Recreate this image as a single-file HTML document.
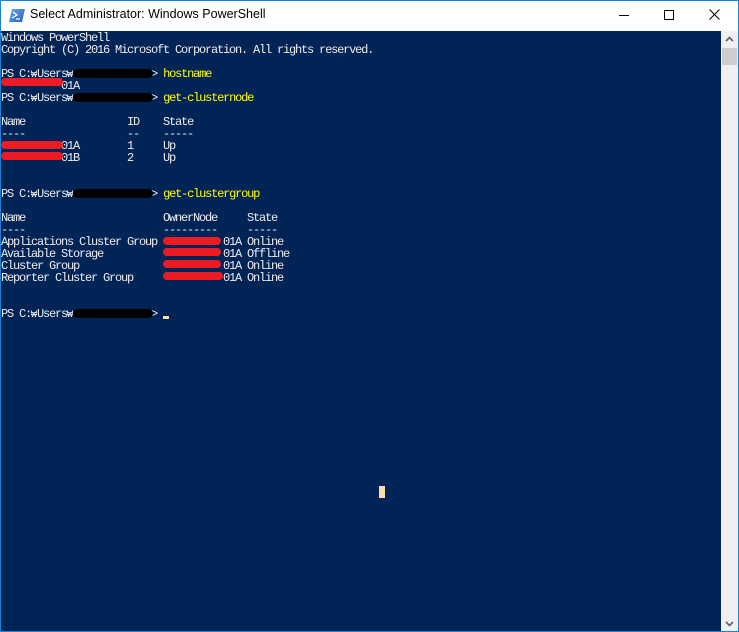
<!DOCTYPE html>
<html><head><meta charset="utf-8"><style>
body{margin:0;width:739px;height:632px;overflow:hidden;background:#fff;position:relative;font-family:"Liberation Sans",sans-serif}
.win{position:absolute;left:0;top:0;width:737px;height:630px;border:1px solid #1883d7;}
.title{position:absolute;left:30px;top:7px;font-size:12.5px;color:#000}
.con{position:absolute;left:1px;top:31px;width:720px;height:600px;background:#012456;}
.sb{position:absolute;left:721px;top:31px;width:17px;height:600px;background:#f0f0f0}
.l{position:absolute;left:1px;font-family:"Liberation Mono",monospace;font-size:12px;line-height:12px;color:#eeedf0;white-space:pre;letter-spacing:-1.2px}
.w{display:inline-block;width:6px;overflow:visible;letter-spacing:0;font-size:10px}
.y{color:#ffff00}
.blk{position:absolute;background:#000;border-radius:5px;height:9px}
.red{position:absolute;background:#ed1c24;border-radius:5px;height:8px}
</style></head><body>
<div class="win"></div>
<svg style="position:absolute;left:9px;top:9px" width="16" height="13"><defs><linearGradient id="g" x1="0" y1="0" x2="1" y2="1"><stop offset="0" stop-color="#6fa8e8"/><stop offset="1" stop-color="#2262b6"/></linearGradient></defs><path d="M3 0H16L13 13H0Z" fill="url(#g)"/><path d="M4 3L8 6L3 9" stroke="#fff" stroke-width="1.3" fill="none"/><path d="M7 10H11" stroke="#fff" stroke-width="1.2"/></svg>
<div class="title">Select Administrator: Windows PowerShell</div>
<div style="position:absolute;left:619px;top:15px;width:10px;height:1px;background:#000"></div>
<div style="position:absolute;left:664px;top:10px;width:8px;height:8px;border:1px solid #000"></div>
<svg style="position:absolute;left:709px;top:9px" width="11" height="11"><path d="M0.5 0.5L10.5 10.5M10.5 0.5L0.5 10.5" stroke="#000" stroke-width="1"/></svg>
<div class="con"></div>
<div class="sb"><div style="position:absolute;left:1px;top:17px;width:15px;height:17px;background:#cdcdcd"></div>
<svg style="position:absolute;left:4px;top:5px" width="9" height="6"><path d="M1 5L4.5 1.5L8 5" stroke="#606060" stroke-width="1.6" fill="none"/></svg>
<svg style="position:absolute;left:4px;top:590px" width="9" height="6"><path d="M1 1L4.5 4.5L8 1" stroke="#606060" stroke-width="1.6" fill="none"/></svg></div>
<div class="l" style="top:32px">Windows PowerShell</div>
<div class="l" style="top:44px">Copyright (C) 2016 Microsoft Corporation. All rights reserved.</div>
<div class="l" style="top:68px">PS C:<span class="w">₩</span>Users<span class="w">₩</span>             &gt; <span class="y">hostname</span></div>
<div class="l" style="top:80px">          01A</div>
<div class="l" style="top:92px">PS C:<span class="w">₩</span>Users<span class="w">₩</span>             &gt; <span class="y">get-clusternode</span></div>
<div class="l" style="top:116px">Name                 ID    State</div>
<div class="l" style="top:128px">----                 --    -----</div>
<div class="l" style="top:140px">          01A        1     Up</div>
<div class="l" style="top:152px">          01B        2     Up</div>
<div class="l" style="top:188px">PS C:<span class="w">₩</span>Users<span class="w">₩</span>             &gt; <span class="y">get-clustergroup</span></div>
<div class="l" style="top:212px">Name                       OwnerNode     State</div>
<div class="l" style="top:224px">----                       ---------     -----</div>
<div class="l" style="top:236px">Applications Cluster Group           01A Online</div>
<div class="l" style="top:248px">Available Storage                    01A Offline</div>
<div class="l" style="top:260px">Cluster Group                        01A Online</div>
<div class="l" style="top:272px">Reporter Cluster Group               01A Online</div>
<div class="l" style="top:308px">PS C:<span class="w">₩</span>Users<span class="w">₩</span>             &gt; </div>
<div class="blk" style="left:73px;top:69px;width:80px"></div>
<div class="blk" style="left:73px;top:93px;width:80px"></div>
<div class="blk" style="left:73px;top:189px;width:80px"></div>
<div class="blk" style="left:73px;top:309px;width:80px"></div>
<div class="red" style="left:1px;top:78px;width:62px"></div>
<div class="red" style="left:1px;top:141px;width:62px"></div>
<div class="red" style="left:1px;top:152px;width:62px"></div>
<div class="red" style="left:163px;top:237px;width:58px"></div>
<div class="red" style="left:163px;top:248px;width:58px"></div>
<div class="red" style="left:163px;top:260px;width:58px"></div>
<div class="red" style="left:163px;top:272px;width:60px"></div>
<div style="position:absolute;left:163px;top:316px;width:6px;height:3px;background:#fedba9"></div>
<div style="position:absolute;left:379px;top:486px;width:6px;height:12px;background:#fedba9"></div>
</body></html>
